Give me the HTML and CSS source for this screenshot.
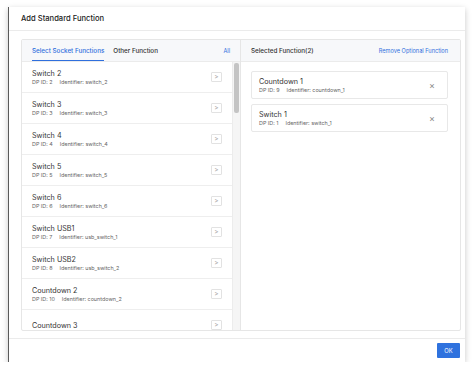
FILE: index.html
```html
<!DOCTYPE html>
<html lang="en">
<head>
  <meta charset="UTF-8">
  <meta name="viewport" content="width=device-width, initial-scale=1.0">
  <title>Add Standard Function</title>
  <link rel="stylesheet" href="styles.css">
</head>
<body>
  <div class="modal">
    <div class="modal-header">Add Standard Function</div>

    <div class="modal-body">
      <div class="panels">
        <!-- 左: 選択可能な機能 -->
        <div class="panel panel-left">
          <div class="panel-head">
            <div class="tabs">
              <span class="tab active">Select Socket Functions</span>
              <span class="tab">Other Function</span>
            </div>
            <span class="link">All</span>
          </div>
          <div class="list-wrap">
            <div class="list">
              <div class="item">
                <div class="item-text">
                  <div class="item-name">Switch 2</div>
                  <div class="item-meta"><span>DP ID: 2</span><span>Identifier: switch_2</span></div>
                </div>
                <span class="add-btn">&gt;</span>
              </div>
              <div class="item">
                <div class="item-text">
                  <div class="item-name">Switch 3</div>
                  <div class="item-meta"><span>DP ID: 3</span><span>Identifier: switch_3</span></div>
                </div>
                <span class="add-btn">&gt;</span>
              </div>
              <div class="item">
                <div class="item-text">
                  <div class="item-name">Switch 4</div>
                  <div class="item-meta"><span>DP ID: 4</span><span>Identifier: switch_4</span></div>
                </div>
                <span class="add-btn">&gt;</span>
              </div>
              <div class="item">
                <div class="item-text">
                  <div class="item-name">Switch 5</div>
                  <div class="item-meta"><span>DP ID: 5</span><span>Identifier: switch_5</span></div>
                </div>
                <span class="add-btn">&gt;</span>
              </div>
              <div class="item">
                <div class="item-text">
                  <div class="item-name">Switch 6</div>
                  <div class="item-meta"><span>DP ID: 6</span><span>Identifier: switch_6</span></div>
                </div>
                <span class="add-btn">&gt;</span>
              </div>
              <div class="item">
                <div class="item-text">
                  <div class="item-name">Switch USB1</div>
                  <div class="item-meta"><span>DP ID: 7</span><span>Identifier: usb_switch_1</span></div>
                </div>
                <span class="add-btn">&gt;</span>
              </div>
              <div class="item">
                <div class="item-text">
                  <div class="item-name">Switch USB2</div>
                  <div class="item-meta"><span>DP ID: 8</span><span>Identifier: usb_switch_2</span></div>
                </div>
                <span class="add-btn">&gt;</span>
              </div>
              <div class="item">
                <div class="item-text">
                  <div class="item-name">Countdown 2</div>
                  <div class="item-meta"><span>DP ID: 10</span><span>Identifier: countdown_2</span></div>
                </div>
                <span class="add-btn">&gt;</span>
              </div>
              <!-- 最後の行はスクロールで途中まで表示 -->
              <div class="item item-partial">
                <div class="item-text">
                  <div class="item-name">Countdown 3</div>
                </div>
                <span class="add-btn">&gt;</span>
              </div>
            </div>
            <div class="scrollbar"><div class="thumb"></div></div>
          </div>
        </div>

        <!-- 右: 選択済みの機能 -->
        <div class="panel panel-right">
          <div class="panel-head">
            <span class="head-title">Selected Function(2)</span>
            <span class="link">Remove Optional Function</span>
          </div>
          <div class="selected">
            <div class="card">
              <div class="item-text">
                <div class="item-name">Countdown 1</div>
                <div class="item-meta"><span>DP ID: 9</span><span>Identifier: countdown_1</span></div>
              </div>
              <span class="remove">&times;</span>
            </div>
            <div class="card">
              <div class="item-text">
                <div class="item-name">Switch 1</div>
                <div class="item-meta"><span>DP ID: 1</span><span>Identifier: switch_1</span></div>
              </div>
              <span class="remove">&times;</span>
            </div>
          </div>
        </div>
      </div>
    </div>

    <div class="modal-footer">
      <button class="ok-btn">OK</button>
    </div>
  </div>
</body>
</html>
```

FILE: styles.css
```css
body {
  margin: 0;
  padding: 7px 8px 0 8px;
  background: #fff;
  font-family: 'Inter', 'Liberation Sans', sans-serif;
  color: #333;
}
.modal {
  width: 457px;
  height: 355px;
  background: #fff;
  border-left: 1px solid #5a5a5a;
  box-shadow: 0 2px 6px rgba(0,0,0,0.22);
  display: flex;
  flex-direction: column;
  box-sizing: border-box;
}
.modal-header {
  height: 24px;
  line-height: 24px;
  padding-left: 12px;
  font-size: 7.6px;
  font-weight: 500;
  color: #222;
  border-bottom: 1px solid #ebebeb;
  box-sizing: border-box;
}
.modal-body {
  flex: 1;
  padding: 8px 4px 7px 12px;
  border-bottom: 1px solid #ebebeb;
  min-height: 0;
}
.panels {
  height: 100%;
  display: grid;
  grid-template-columns: 219px 1fr;
  border: 1px solid #e6e6e6;
  border-radius: 2px;
  box-sizing: border-box;
  overflow: hidden;
}
.panel {
  display: flex;
  flex-direction: column;
  min-height: 0;
}
.panel-left {
  border-right: 1px solid #e6e6e6;
}
.panel-head {
  height: 22px;
  flex: none;
  display: flex;
  align-items: stretch;
  justify-content: space-between;
  background: #f7f8fa;
  border-bottom: 1px solid #ebebeb;
  box-sizing: border-box;
  font-size: 6.3px;
}
.panel-left .panel-head {
  padding: 0 10px 0 10px;
}
.panel-right .panel-head {
  padding: 0 12px 0 10px;
  align-items: center;
}
.tabs {
  display: flex;
  gap: 9px;
}
.tab {
  display: flex;
  align-items: center;
  color: #333;
  font-weight: 500;
  border-bottom: 1.5px solid transparent;
  padding-top: 1px;
}
.tab.active {
  color: #2f6fdd;
  border-bottom-color: #2f6fdd;
}
.link {
  color: #2f6fdd;
  font-size: 5.6px;
  align-self: center;
}
.head-title {
  color: #333;
  font-weight: 500;
}
.list-wrap {
  flex: 1;
  display: flex;
  min-height: 0;
  overflow: hidden;
}
.list {
  flex: 1;
}
.item {
  height: 31px;
  display: flex;
  align-items: center;
  justify-content: space-between;
  padding: 0 10px 0 10px;
  border-bottom: 1px solid #eeeeee;
  box-sizing: border-box;
}
.item-partial {
  height: 20px;
  align-items: flex-end;
  border-bottom: none;
}
.item-name {
  font-size: 7.2px;
  color: #333;
  line-height: 9px;
}
.item-meta {
  font-size: 5.4px;
  color: #666;
  line-height: 8px;
  display: flex;
  gap: 7px;
}
.add-btn {
  width: 11px;
  height: 10px;
  border: 1px solid #e2e2e2;
  border-radius: 1px;
  box-sizing: border-box;
  display: flex;
  align-items: center;
  justify-content: center;
  font-size: 6.5px;
  color: #aaa;
}
.scrollbar {
  width: 7px;
  background: #f5f5f5;
  border-left: 1px solid #ececec;
  flex: none;
}
.thumb {
  margin: 1px 1px 0 1px;
  height: 50px;
  background: #c4c4c4;
  border-radius: 2px;
}
.selected {
  padding: 9px 12px 0 10px;
  display: flex;
  flex-direction: column;
  gap: 5px;
}
.card {
  height: 28px;
  display: flex;
  align-items: center;
  justify-content: space-between;
  padding: 0 12px 0 7px;
  border: 1px solid #e8e8e8;
  border-radius: 2px;
  box-sizing: border-box;
}
.remove {
  color: #888;
  font-size: 9px;
}
.modal-footer {
  height: 23px;
  flex: none;
  display: flex;
  align-items: center;
  justify-content: flex-end;
  padding-right: 5px;
}
.ok-btn {
  width: 23px;
  height: 15px;
  padding: 0;
  border: none;
  border-radius: 1px;
  background: #2f72de;
  color: #fff;
  font-family: inherit;
  font-size: 5.8px;
}
```
